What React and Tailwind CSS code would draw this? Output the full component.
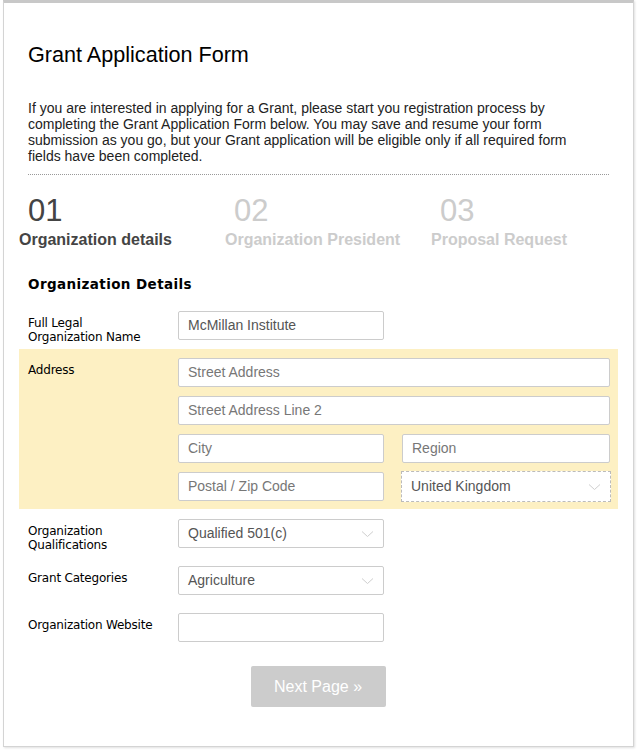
import React from "react";

const arial = { fontFamily: '"Liberation Sans", Arial, sans-serif' };

function Chevron() {
  return (
    <svg width="13" height="8" viewBox="0 0 13 8" className="shrink-0">
      <path d="M1 1.5 L6.5 6.5 L12 1.5" fill="none" stroke="#cfcfcf" strokeWidth="1" />
    </svg>
  );
}

function Input({ value, placeholder, className = "" }) {
  return (
    <div
      className={`h-[29px] border border-[#ccc] rounded-[2px] bg-white flex items-center px-[9px] text-[14px] ${value ? "text-[#555]" : "text-[#777]"} ${className}`}
      style={arial}
    >
      {value || placeholder || ""}
    </div>
  );
}

function Select({ value, className = "", dashed = false }) {
  return (
    <div
      className={`h-[29px] ${dashed ? "border border-dashed border-[#bbb]" : "border border-[#ccc] rounded-[2px]"} bg-white flex items-center justify-between pl-[9px] pr-[9px] text-[14px] text-[#555] ${className}`}
      style={arial}
    >
      <span>{value}</span>
      <Chevron />
    </div>
  );
}

function Label({ children }) {
  return (
    <div
      className="w-[150px] shrink-0 text-[12px] leading-[14px] text-black pt-[5px]"
      style={{ fontFamily: '"DejaVu Sans", Verdana, sans-serif', letterSpacing: "-0.2px" }}
    >
      {children}
    </div>
  );
}

function Step({ num, label, active }) {
  return (
    <div className="w-[206px] shrink-0" style={arial}>
      <div className={`pl-[9px] text-[31px] leading-[34px] ${active ? "text-[#444]" : "text-[#ccc]"}`}>{num}</div>
      <div className={`mt-[2px] text-[16px] font-bold leading-[20px] ${active ? "text-[#444]" : "text-[#ccc]"}`}>{label}</div>
    </div>
  );
}

export default function App() {
  return (
    <div className="w-[637px] h-[750px] bg-white">
      <div className="ml-[3px] w-[631px] h-[747px] border border-[#d4d4d4] border-t-[3px] border-t-[#c8c8c8] shadow-[1px_1px_2px_rgba(0,0,0,0.12)] bg-white">
        <div className="px-[24px] pt-[39px]" style={arial}>
          <h1 className="text-[21.6px] leading-[26px] text-black">Grant Application Form</h1>
          <p className="mt-[32px] text-[14px] leading-[16px] text-[#222] pr-[8px]">
            If you are interested in applying for a Grant, please start you registration process by completing the Grant Application Form below. You may save and resume your form submission as you go, but your Grant application will be eligible only if all required form fields have been completed.
          </p>
          <div className="mt-[10px] border-t border-dotted border-[#999]" />
        </div>

        <div className="flex pl-[15px] mt-[19px]">
          <Step num="01" label="Organization details" active />
          <Step num="02" label="Organization President" />
          <Step num="03" label="Proposal Request" />
        </div>

        <div className="px-[24px] mt-[25px]">
          <h2
            className="text-[13.5px] font-bold text-black leading-[18px]"
            style={{ fontFamily: '"DejaVu Sans", Verdana, sans-serif', letterSpacing: "0.4px" }}
          >
            Organization Details
          </h2>
        </div>

        <div className="mt-[18px] flex flex-col">
          <div className="flex px-[24px] h-[29px]">
            <Label>
              Full Legal
              <br />
              Organization Name
            </Label>
            <Input value="McMillan Institute" className="w-[206px]" />
          </div>

          <div className="mt-[9px] mx-[15px] bg-[#fdf0c3] pt-[9px] pb-[8px] pl-[9px] pr-[8px] flex">
            <Label>Address</Label>
            <div className="flex-1 flex flex-col gap-[9px]">
              <Input placeholder="Street Address" />
              <Input placeholder="Street Address Line 2" />
              <div className="flex gap-[18px]">
                <Input placeholder="City" className="w-[206px]" />
                <Input placeholder="Region" className="flex-1" />
              </div>
              <div className="flex gap-[17px]">
                <Input placeholder="Postal / Zip Code" className="w-[206px]" />
                <Select value="United Kingdom" dashed className="flex-1 h-[31px] -my-[1px] -mr-[1px]" />
              </div>
            </div>
          </div>

          <div className="mt-[10px] flex px-[24px] h-[29px]">
            <Label>
              Organization
              <br />
              Qualifications
            </Label>
            <Select value="Qualified 501(c)" className="w-[206px]" />
          </div>

          <div className="mt-[18px] flex px-[24px] h-[29px]">
            <Label>Grant Categories</Label>
            <Select value="Agriculture" className="w-[206px]" />
          </div>

          <div className="mt-[18px] flex px-[24px] h-[29px]">
            <Label>Organization Website</Label>
            <Input className="w-[206px]" />
          </div>

          <div className="mt-[24px] flex justify-center pr-[1px]">
            <button
              className="w-[135px] h-[41px] bg-[#cccccc] rounded-[2px] text-white text-[16px]"
              style={arial}
            >
              Next Page »
            </button>
          </div>
        </div>
      </div>
    </div>
  );
}
